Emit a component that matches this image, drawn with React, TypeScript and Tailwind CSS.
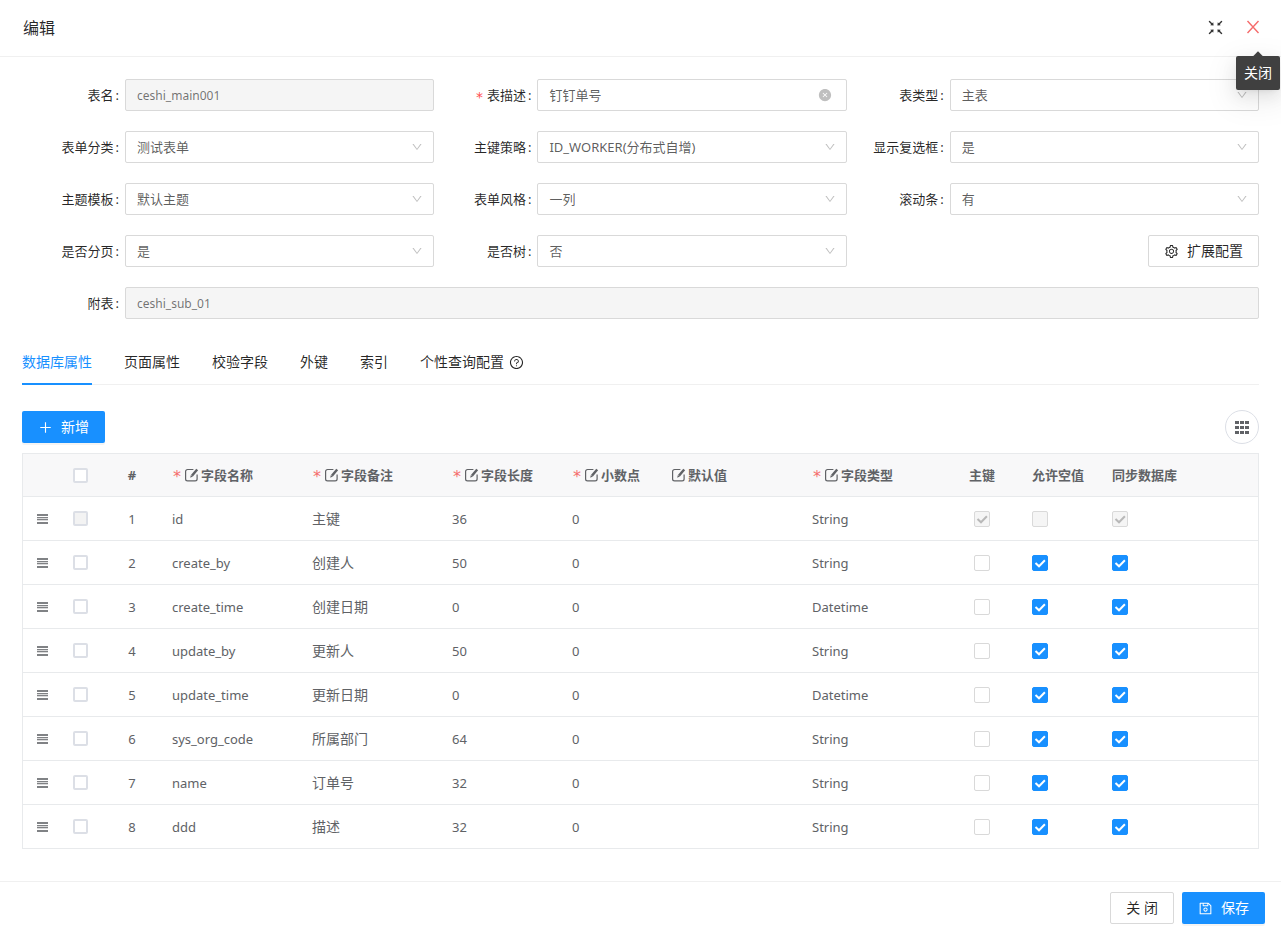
import React, { useState } from "react";
import {
  AiOutlineDown,
  AiOutlineFullscreenExit,
  AiOutlinePlus,
  AiOutlineQuestionCircle,
  AiOutlineSave,
  AiOutlineSetting,
  AiFillCloseCircle,
} from "react-icons/ai";

const fontStack =
  "font-['Noto_Sans','Noto_Sans_CJK_SC',sans-serif]";

type FieldProps = {
  id: string;
  label: string;
  required?: boolean;
  children: React.ReactNode;
};

function Field({ id, label, required, children }: FieldProps) {
  return (
    <div className="flex items-center">
      <label htmlFor={id} className="flex w-1/4 items-center justify-end pr-1.5 text-[13px] whitespace-nowrap text-black/85">
        {required && (
          <span className="mr-1 pt-1 font-['DejaVu_Sans',sans-serif] text-sm leading-4 text-[#ff4d4f]">*</span>
        )}
        {label}
        <span className="ml-0.5">:</span>
      </label>
      <div className="relative w-3/4">{children}</div>
    </div>
  );
}

function SelectField({ id, label, value, options }: { id: string; label: string; value: string; options?: string[] }) {
  return (
    <Field id={id} label={label}>
      <select
        id={id}
        defaultValue={value}
        className="block h-8 w-full appearance-none rounded-xs border border-[#d9d9d9] bg-white px-[11px] text-[13px] text-black/65 outline-none"
      >
        {(options ?? [value]).map((o) => (
          <option key={o}>{o}</option>
        ))}
      </select>
      <AiOutlineDown className="pointer-events-none absolute top-2.5 right-[11px] size-3 text-black/25" />
    </Field>
  );
}

const disabledInput =
  "block h-8 w-full rounded-xs border border-[#d9d9d9] bg-[#f5f5f5] px-[11px] text-xs text-black/55 outline-none";

function EditIcon() {
  return (
    <svg viewBox="0 0 14 14" className="size-3.5 shrink-0" fill="none" stroke="currentColor" aria-hidden="true">
      <path d="M8.4 1.5H2.6C1.4 1.5.6 2.3.6 3.5v7.4c0 1.1.8 1.9 2 1.9h7.5c1.2 0 2-.8 2-1.9V6.6" strokeWidth="1.2" />
      <path d="M12.2 1.5 7 7.6" strokeWidth="2.4" />
      <path d="M5.2 9.8 5.9 6.9 7.9 8.6Z" fill="currentColor" stroke="none" />
    </svg>
  );
}

function DragIcon() {
  return (
    <svg viewBox="0 0 11 10" className="block h-2.5 w-[11px] text-[#808285]" fill="currentColor" aria-hidden="true">
      <path d="M0 0h11v2H0zM0 3h11v1H0zM0 5h11v1H0zM0 8h11v2H0z" />
      <path d="M0 4h11v1H0zM0 6h11v1H0z" opacity=".3" />
    </svg>
  );
}

type BoxProps = { label: string; checked?: boolean; disabled?: boolean };

function CheckBox({ label, checked = false, disabled = false }: BoxProps) {
  const [on, setOn] = useState(checked);
  return (
    <span className="relative block size-4">
      <input
        type="checkbox"
        aria-label={label}
        checked={on}
        disabled={disabled}
        onChange={(e) => setOn(e.target.checked)}
        className="block size-4 appearance-none rounded-xs border border-[#d9d9d9] bg-white enabled:checked:border-[#1890ff] enabled:checked:bg-[#1890ff] disabled:bg-[#f5f5f5]"
      />
      {on && (
        <svg
          viewBox="0 0 16 16"
          className={disabled ? "pointer-events-none absolute inset-0 text-[#b8b8b8]" : "pointer-events-none absolute inset-0 text-white"}
          fill="none"
          stroke="currentColor"
          strokeWidth="2"
          aria-hidden="true"
        >
          <path d="M3.5 8 7 11.3 12.9 5.3" />
        </svg>
      )}
    </span>
  );
}

function RowSelect({ label, disabled = false }: { label: string; disabled?: boolean }) {
  return (
    <input
      type="checkbox"
      aria-label={label}
      disabled={disabled}
      className="ml-px block size-[15px] appearance-none rounded-xs border-2 border-[#dcdfe6] bg-white checked:bg-[#1890ff] disabled:bg-[#f3f3f3]"
    />
  );
}

function HeadText({ text, required, editable }: { text: string; required?: boolean; editable?: boolean }) {
  return (
    <span className="flex items-center">
      {required && (
        <span className="mr-1 ml-px w-2 pt-1 font-['DejaVu_Sans',sans-serif] text-base leading-4 font-normal text-[#f56c6c]">*</span>
      )}
      {editable && <EditIcon />}
      <span className={editable ? "ml-0.5" : ""}>{text}</span>
    </span>
  );
}

const rows = [
  ["id", "主键", "36", "String"],
  ["create_by", "创建人", "50", "String"],
  ["create_time", "创建日期", "0", "Datetime"],
  ["update_by", "更新人", "50", "String"],
  ["update_time", "更新日期", "0", "Datetime"],
  ["sys_org_code", "所属部门", "64", "String"],
  ["name", "订单号", "32", "String"],
  ["ddd", "描述", "32", "String"],
];

const tabs = ["数据库属性", "页面属性", "校验字段", "外键", "索引"];

const cell = "h-11 border-b border-[#e8eaec] px-2.5";
const td = "h-11 border-b border-[#e8eaec] px-2.5 pt-0.5 text-[13px]";
const th = "h-[43px] border-b border-[#e8eaec] px-2.5 text-left font-bold whitespace-nowrap";

export default function App() {
  const [name, setName] = useState("钉钉单号");
  return (
    <div className={`${fontStack} flex min-h-screen flex-col bg-white text-sm text-black/85`}>
      <header className="flex h-[57px] items-center justify-between border-b border-[#f0f0f0] pr-5 pl-[23px]">
        <h1 className="text-base">编辑</h1>
        <div className="flex items-center gap-5 pb-0.5">
          <button aria-label="退出全屏" className="text-[#333]">
            <AiOutlineFullscreenExit className="size-[19px]" />
          </button>
          <div className="relative">
            <button aria-label="关闭窗口" className="block text-[#f56c6c]">
              <svg viewBox="0 0 16 16" className="size-4" fill="none" stroke="currentColor" strokeWidth="1.4" aria-hidden="true">
                <path d="M2.5 2 13.500 14M13.500 2 2.500 14" />
              </svg>
            </button>
            <div
              role="tooltip"
              className="absolute top-[37px] -right-[19px] z-10 flex h-[34px] w-11 items-center justify-center rounded-xs bg-[#404040] text-sm whitespace-nowrap text-white shadow-[0_3px_6px_-4px_rgba(0,0,0,.12),0_6px_16px_rgba(0,0,0,.08),0_9px_28px_8px_rgba(0,0,0,.05)]"
            >
              <span className="absolute -top-[3px] left-[18px] size-2 rotate-45 bg-[#404040]" />
              <span className="relative">关闭</span>
            </div>
          </div>
        </div>
      </header>

      <main className="flex-1 px-[22px] pt-[22px]">
        <form className="grid grid-cols-3 gap-y-5">
          <Field id="table-name" label="表名">
            <input id="table-name" disabled defaultValue="ceshi_main001" className={disabledInput} />
          </Field>
          <Field id="table-desc" label="表描述" required>
            <input
              id="table-desc"
              value={name}
              onChange={(e) => setName(e.target.value)}
              className="block h-8 w-full rounded-xs border border-[#d9d9d9] bg-white pr-9 pb-0.5 pl-[11px] text-[13px] text-black/65 outline-none"
            />
            <button type="button" aria-label="清空" onClick={() => setName("")} className="absolute top-[9px] right-[15px] text-black/25">
              <AiFillCloseCircle className="block size-3.5" />
            </button>
          </Field>
          <SelectField id="table-type" label="表类型" value="主表" />
          <SelectField id="category" label="表单分类" value="测试表单" />
          <SelectField id="strategy" label="主键策略" value="ID_WORKER(分布式自增)" />
          <SelectField id="show-check" label="显示复选框" value="是" options={["是", "否"]} />
          <SelectField id="theme" label="主题模板" value="默认主题" />
          <SelectField id="style" label="表单风格" value="一列" />
          <SelectField id="scroll" label="滚动条" value="有" options={["有", "无"]} />
          <SelectField id="paging" label="是否分页" value="是" options={["是", "否"]} />
          <SelectField id="tree" label="是否树" value="否" options={["是", "否"]} />
          <div className="flex justify-end">
            <button type="button" className="flex h-8 items-center gap-2 rounded-xs border border-[#d9d9d9] px-[15px]">
              <AiOutlineSetting className="size-[15px]" />
              <span>扩展配置</span>
            </button>
          </div>
          <div className="col-span-3 flex items-center">
            <label htmlFor="sub-table" className="w-1/12 pr-1.5 text-right text-[13px] whitespace-nowrap">
              附表<span className="ml-0.5">:</span>
            </label>
            <div className="w-11/12">
              <input id="sub-table" disabled defaultValue="ceshi_sub_01" className={disabledInput} />
            </div>
          </div>
        </form>

        <nav role="tablist" className="mt-5 flex gap-8 border-b border-[#f0f0f0]">
          {tabs.map((t, i) => (
            <button
              key={t}
              role="tab"
              aria-selected={i === 0}
              className={
                i === 0
                  ? "-mb-px h-[46px] border-b-2 border-[#1890ff] pt-0.5 text-[#1890ff]"
                  : "-mb-px h-[46px] border-b-2 border-transparent pt-0.5"
              }
            >
              {t}
            </button>
          ))}
          <button role="tab" aria-selected={false} className="-mb-px flex h-[46px] items-center gap-[5px] border-b-2 border-transparent pt-0.5">
            个性查询配置
            <AiOutlineQuestionCircle className="size-[15px]" />
          </button>
        </nav>

        <div className="mt-[25px] flex items-center justify-between">
          <button className="flex h-8 items-center gap-2 rounded-xs bg-[#1890ff] px-4 text-white shadow-[0_2px_0_rgba(0,0,0,.045)]">
            <AiOutlinePlus className="size-[15px]" />
            <span>新增</span>
          </button>
          <button aria-label="列设置" className="flex size-[34px] items-center justify-center rounded-full border border-[#dcdfe6] text-[#606266]">
            <svg viewBox="0 0 14 13" className="h-[13px] w-3.5" fill="currentColor" aria-hidden="true">
              <path d="M0 0h4v3H0zM5 0h4v3H5zM10 0h4v3h-4zM0 5h4v3H0zM5 5h4v3H5zM10 5h4v3h-4zM0 10h4v3H0zM5 10h4v3H5zM10 10h4v3h-4z" />
            </svg>
          </button>
        </div>

        <div className="mt-[9px] border-x border-t border-[#e8eaec] text-[#606266]">
          <table className="w-full table-fixed border-separate border-spacing-0">
            <colgroup>
              <col className="w-[39px]" />
              <col className="w-10" />
              <col className="w-[60px]" />
              <col className="w-[140px]" />
              <col className="w-[140px]" />
              <col className="w-[120px]" />
              <col className="w-[100px]" />
              <col className="w-[140px]" />
              <col className="w-[140px]" />
              <col className="w-20" />
              <col className="w-20" />
              <col />
            </colgroup>
            <thead className="bg-[#f8f8f9] text-[13px]">
              <tr>
                <th className={th} />
                <th className={th}>
                  <RowSelect label="全选" />
                </th>
                <th className={th}>
                  <span className="block text-center">#</span>
                </th>
                <th className={th}><HeadText text="字段名称" required editable /></th>
                <th className={th}><HeadText text="字段备注" required editable /></th>
                <th className={th}><HeadText text="字段长度" required editable /></th>
                <th className={th}><HeadText text="小数点" required editable /></th>
                <th className={th}><HeadText text="默认值" editable /></th>
                <th className={th}><HeadText text="字段类型" required editable /></th>
                <th className={th}>
                  <span className="block text-center">主键</span>
                </th>
                <th className={th}>允许空值</th>
                <th className={th}>同步数据库</th>
              </tr>
            </thead>
            <tbody>
              {rows.map(([field, remark, length, type], i) => (
                <tr key={field}>
                  <td className={`${cell} pl-3.5`}><DragIcon /></td>
                  <td className={cell}><RowSelect label={`选择 ${field}`} disabled={i === 0} /></td>
                  <td className={`${td} text-center`}>{i + 1}</td>
                  <td className={td}>{field}</td>
                  <td className={cell}>{remark}</td>
                  <td className={td}>{length}</td>
                  <td className={td}>0</td>
                  <td className={td} />
                  <td className={td}>{type}</td>
                  <td className={cell}>
                    <div className="flex justify-center">
                      <CheckBox label={`${field} 主键`} checked={i === 0} disabled={i === 0} />
                    </div>
                  </td>
                  <td className={cell}><CheckBox label={`${field} 允许空值`} checked={i !== 0} disabled={i === 0} /></td>
                  <td className={cell}><CheckBox label={`${field} 同步数据库`} checked disabled={i === 0} /></td>
                </tr>
              ))}
            </tbody>
          </table>
        </div>
      </main>

      <footer className="mt-8 flex justify-end gap-2 border-t border-[#f0f0f0] px-4 pt-2.5 pb-[13px]">
        <button className="h-8 rounded-xs border border-[#d9d9d9] px-[15px]">关 闭</button>
        <button className="flex h-8 items-center gap-2 rounded-xs bg-[#1890ff] px-4 text-white shadow-[0_2px_0_rgba(0,0,0,.045)]">
          <AiOutlineSave className="size-[15px]" />
          <span>保存</span>
        </button>
      </footer>
    </div>
  );
}
